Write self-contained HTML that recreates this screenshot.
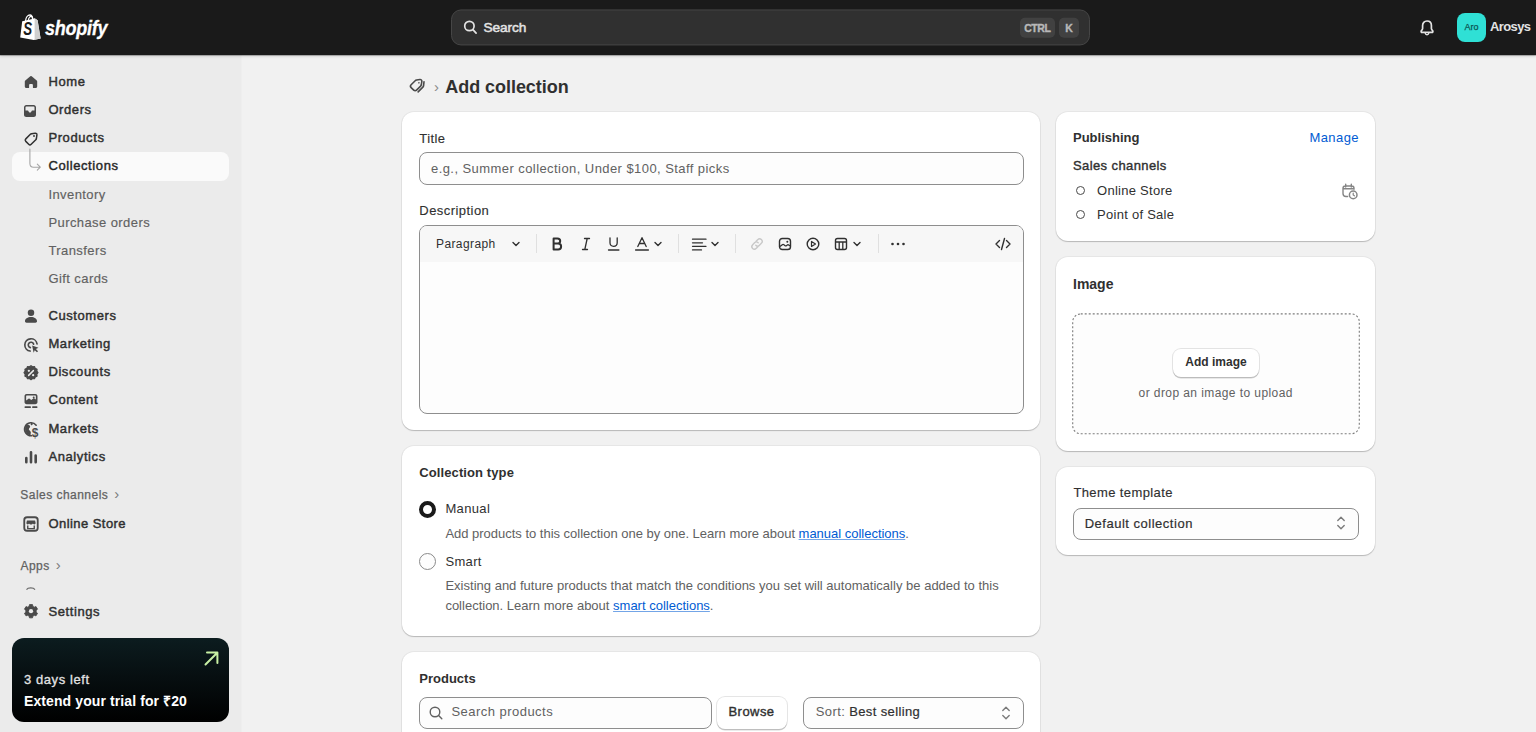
<!DOCTYPE html>
<html><head><meta charset="utf-8">
<style>
*{box-sizing:border-box;margin:0;padding:0}
html,body{width:1536px;height:732px;overflow:hidden;background:#f1f1f1;font-family:"Liberation Sans",sans-serif;font-size:13px;color:#303030}
.abs{position:absolute}
#top{position:absolute;left:0;top:0;width:1536px;height:55px;background:#1a1a1a;z-index:5;box-shadow:0 1px 0 rgba(0,0,0,.22),0 1px 3px rgba(0,0,0,.18)}
#side{position:absolute;left:0;top:56px;width:242px;height:676px;background:#ebebeb;border-right:1px solid #eeeeee}
.nav{position:absolute;left:48.4px;height:20px;line-height:20px;font-size:13px;font-weight:400;-webkit-text-stroke:.45px #303030;letter-spacing:.6px;color:#303030;white-space:nowrap}
.nav.sub{font-weight:400;color:#616161;letter-spacing:.42px;-webkit-text-stroke:.15px #616161}
.ico{position:absolute;left:20px;width:20px;height:20px}
.card{position:absolute;background:#fff;border-radius:12px;box-shadow:0 1px 0 0 rgba(0,0,0,.09),0 1px 1.5px 0 rgba(0,0,0,.12),0 0 0 1px rgba(0,0,0,.045)}
.lbl{position:absolute;font-size:13px;line-height:20px;color:#303030;white-space:nowrap}
.b{font-weight:700}
.inp{position:absolute;background:#fdfdfd;border:1px solid #8e8e8e;border-radius:8px}
.ph{position:absolute;color:#616161;font-size:13px;line-height:20px;white-space:nowrap}
.lnk{color:#005bd3;text-decoration:underline;text-decoration-color:rgba(0,91,211,.55)}

.kbd{top:18px;height:20px;line-height:20px;border-radius:5px;background:#414141;color:#b8b8b8;font-size:10.5px;font-weight:700;text-align:center;letter-spacing:-.45px;transform:translateY(-.3px);-webkit-text-stroke:.35px #b8b8b8}
.sec{font-size:12px;line-height:20px;color:#616161;letter-spacing:.47px;white-space:nowrap;-webkit-text-stroke:.25px #616161}
.chev{font-size:15px;margin-left:6px;letter-spacing:0;position:relative;top:0px;color:#7a7a7a;-webkit-text-stroke:0}

.btn{background:#fff;border-radius:8px;text-align:center;font-weight:700;color:#303030;box-shadow:0 0 0 1px rgba(0,0,0,.1),0 1.5px 0 0 rgba(0,0,0,.17)}

.m1{-webkit-text-stroke:.12px #303030}
.m2{font-weight:400;-webkit-text-stroke:.38px #303030}
</style></head><body>
<div id="top">
<svg class="abs" style="left:19px;top:13px" width="24" height="28" viewBox="0 0 24 28">
<path d="M3.2 8.2 L12.2 6.2 L15.6 5.2 L18.6 7.2 L21.6 25.4 L14.8 27 L1.2 24.6 Z" fill="#fff"/>
<path d="M15.6 5.2 L18.6 7.2 L21.6 25.4 L15.6 26.8 Z" fill="#cfcfcf"/>
<path d="M6.5 8 C6.8 4.5 8.8 2 11 2 C12.6 2 13.4 3.6 13.6 6.2" fill="none" stroke="#fff" stroke-width="1.3"/>
<path d="M9.2 7.5 C9.6 4.6 11 3.2 12.4 3.4 C13.4 3.6 13.8 5 13.6 6.4" fill="none" stroke="#fff" stroke-width="1.1"/>
<text transform="translate(4.2,22.2) scale(.74,1)" font-family="Liberation Sans" font-weight="700" font-style="italic" font-size="18" fill="#1a1a1a">S</text>
</svg>
<div class="abs" id="wm" style="left:44.5px;top:15.7px;font-size:21px;line-height:24px;font-weight:700;font-style:italic;color:#fff;letter-spacing:-.3px;transform:scaleX(.86);transform-origin:0 0;-webkit-text-stroke:.3px #fff">shopify</div>
<div class="abs" style="left:451px;top:10px;width:639px;height:36.4px;background:#303030;border:1px solid #464646;border-radius:10px;transform:translateY(-.55px)"></div>
<svg class="abs" style="left:462px;top:19px" width="18" height="18" viewBox="0 0 18 18"><circle cx="7.4" cy="7" r="4.7" fill="none" stroke="#e3e3e3" stroke-width="1.7"/><path d="M10.9 10.6 L14.1 14.1" stroke="#e3e3e3" stroke-width="1.7" stroke-linecap="round"/></svg>
<div class="abs" style="left:483.4px;top:18px;font-size:13.7px;line-height:20px;font-weight:400;-webkit-text-stroke:.5px #e3e3e3;letter-spacing:-.1px;color:#e3e3e3">Search</div>
<div class="abs kbd" style="left:1020.3px;width:34.6px;text-indent:-.5px">CTRL</div>
<div class="abs kbd" style="left:1059px;width:20px;text-indent:-.5px">K</div>
<svg class="abs" style="left:1417px;top:18px" width="20" height="20" viewBox="0 0 20 20"><path d="M10 3 C7.2 3 5.6 5.1 5.6 7.6 L5.6 10.4 C5.6 11.4 4.6 12.2 4.2 13 C3.9 13.7 4.3 14.4 5.1 14.4 L14.9 14.4 C15.7 14.4 16.1 13.7 15.8 13 C15.4 12.2 14.4 11.4 14.4 10.4 L14.4 7.6 C14.4 5.1 12.8 3 10 3 Z" fill="none" stroke="#e3e3e3" stroke-width="1.7" stroke-linejoin="round"/><path d="M8.2 15 C8.4 16.2 9.1 16.8 10 16.8 C10.9 16.8 11.6 16.2 11.8 15" fill="none" stroke="#e3e3e3" stroke-width="1.5"/></svg>
<div class="abs" style="left:1457px;top:13px;width:29px;height:29px;border-radius:8px;background:#2fe0d5;color:#0b5654;font-size:9px;line-height:29px;text-align:center;-webkit-text-stroke:.25px #0b5654">Aro</div>
<div class="abs" style="left:1490px;top:17px;font-size:13px;line-height:20px;font-weight:700;color:#e3e3e3;letter-spacing:-.62px">Arosys</div>
</div>
<div id="side" style="top:0;height:732px;z-index:0"></div>
<div id="sb">
<div class="abs" style="left:12px;top:152px;width:217px;height:29px;background:#fafafa;border-radius:8px"></div>
<svg class="abs" style="left:24px;top:146px" width="20" height="28" viewBox="0 0 20 28"><path d="M5.9 3v14.5c0 2.4 1.2 3.7 3.6 3.7h6.5M13.3 18.2l3 3-3 3" fill="none" stroke="#a6a6a6" stroke-width="1.1" stroke-linecap="round" stroke-linejoin="round"/></svg>
<svg class="ico" style="top:72px;left:20.6px" viewBox="0 0 20 20"><path d="M9.3 4.3a1.1 1.1 0 0 1 1.4 0l5 4.1c.3.3.5.6.5 1v5.1c0 .9-.7 1.5-1.5 1.5h-2.2a.6.6 0 0 1-.6-.6v-2.5c0-.5-.4-.9-.9-.9h-2c-.5 0-.9.4-.9.9v2.5a.6.6 0 0 1-.6.6h-2.2c-.8 0-1.5-.6-1.5-1.5v-5.1c0-.4.2-.7.5-1z" fill="#4a4a4a"/></svg><div class="nav " style="top:72px">Home</div>
<svg class="ico" style="top:100.6px;left:20.2px" viewBox="0 0 20 20"><path d="M6.3 4h7.4c1.3 0 2.3 1 2.3 2.3v7.4c0 1.3-1 2.3-2.3 2.3h-7.4c-1.3 0-2.3-1-2.3-2.3v-7.4c0-1.3 1-2.3 2.3-2.3zm-.8 5.5v-3.2c0-.4.4-.8.8-.8h7.4c.4 0 .8.4.8.8v3.2h-2.2c-.4 0-.7.3-.8.7-.2.8-.8 1.3-1.5 1.3s-1.3-.5-1.5-1.3c-.1-.4-.4-.7-.8-.7z" fill="#4a4a4a" fill-rule="evenodd"/></svg><div class="nav " style="top:100px">Orders</div>
<svg class="ico" style="top:129px;left:20.5px" viewBox="0 0 20 20"><path d="M10.6 4.7l3.6-.5c1-.1 1.8.7 1.7 1.7l-.5 3.6c-.1.5-.3.9-.6 1.2l-4.6 4.6c-.7.7-1.8.7-2.5 0l-2.9-2.9c-.7-.7-.7-1.8 0-2.5l4.6-4.6c.3-.3.7-.5 1.2-.6z" fill="none" stroke="#303030" stroke-width="1.5" stroke-linejoin="round"/><circle cx="13" cy="7" r=".9" fill="#303030"/></svg><div class="nav " style="top:128px">Products</div>
<svg class="ico" style="top:306px;left:20.9px;transform:scale(1.12);top:306.3px" viewBox="0 0 20 20"><circle cx="10" cy="7" r="2.9" fill="#4a4a4a"/><path d="M4.6 14.7c0-2.3 2.4-3.9 5.4-3.9s5.4 1.6 5.4 3.9c0 .8-.6 1.3-1.4 1.3h-8c-.8 0-1.4-.5-1.4-1.3z" fill="#4a4a4a"/></svg><div class="nav " style="top:306px">Customers</div>
<svg class="ico" style="top:334px;left:21px;transform:scale(1.1);top:334.8px" viewBox="0 0 20 20"><path d="M15.5 9a5.6 5.6 0 1 0-6.3 6.5" fill="none" stroke="#4a4a4a" stroke-width="1.5" stroke-linecap="round"/><path d="M12.4 9.2a2.5 2.5 0 1 0-3 3.2" fill="none" stroke="#4a4a4a" stroke-width="1.5" stroke-linecap="round"/><path d="M11 10.5l5.8 2-2.3 1.2 1.9 2-1 1-2-1.9-1 2.3z" fill="#4a4a4a"/></svg><div class="nav " style="top:334px">Marketing</div>
<svg class="ico" style="top:362px;left:20.9px;transform:scale(1.13);top:362.6px" viewBox="0 0 20 20"><path d="M10 3.5l1.4 1 1.7-.2.7 1.6 1.6.7-.2 1.7 1 1.4-1 1.4.2 1.7-1.6.7-.7 1.6-1.7-.2-1.4 1-1.4-1-1.7.2-.7-1.6-1.6-.7.2-1.7-1-1.4 1-1.4-.2-1.7 1.6-.7.7-1.6 1.7.2z" fill="#4a4a4a" stroke="#4a4a4a" stroke-width="1" stroke-linejoin="round"/><path d="M7.9 12.1l4.2-4.2" stroke="#ebebeb" stroke-width="1.3" stroke-linecap="round"/><circle cx="8.1" cy="8.1" r="1" fill="#ebebeb"/><circle cx="11.9" cy="11.9" r="1" fill="#ebebeb"/></svg><div class="nav " style="top:362px">Discounts</div>
<svg class="ico" style="top:390px;left:20.8px;transform:scale(1.08);top:390.6px" viewBox="0 0 20 20"><path d="M6 3.5h8c1.2 0 2 .8 2 2v5.5c0 1.2-.8 2-2 2h-8c-1.2 0-2-.8-2-2v-5.5c0-1.2.8-2 2-2zm-.5 2v4l2.2-1.6c.3-.2.7-.2 1 0l1.6 1.2 1.8-1.4c.3-.2.7-.2 1 0l1.4 1v-3.2c0-.3-.2-.5-.5-.5h-8c-.3 0-.5.2-.5.5z" fill="#4a4a4a" fill-rule="evenodd"/><circle cx="12.5" cy="6.7" r=".9" fill="#4a4a4a"/><path d="M4.7 15.7h4.6M11.7 15.7h3.6" stroke="#4a4a4a" stroke-width="1.5" stroke-linecap="round"/></svg><div class="nav " style="top:390px">Content</div>
<svg class="ico" style="top:419px;left:20.9px;transform:scale(1.08);top:419px" viewBox="0 0 20 20"><path d="M14.8 6.5a6 6 0 1 0-4.3 9.7" fill="none" stroke="#4a4a4a" stroke-width="1.5" stroke-linecap="round"/><path d="M6 5.5c1.5.2 3 .8 3.2 2 .2 1.3-1.2 1.7-1.2 2.8 0 1 1.5 1.3 1.8 2.5.2 1-.3 2.2-.3 3.2-2.5-.3-5-2.8-5-5.8 0-1.8.5-3.5 1.5-4.7z" fill="#4a4a4a"/><path d="M10 3.8c1 .2 1.8 1 1.5 2-.2.7-1 .8-1.8.5z" fill="#4a4a4a"/><text x="10.8" y="17" font-family="Liberation Sans" font-weight="700" font-size="11" fill="#4a4a4a">$</text></svg><div class="nav " style="top:419px">Markets</div>
<svg class="ico" style="top:447px;left:20.8px;transform:scale(1.04);top:447.2px" viewBox="0 0 20 20"><path d="M5.5 11v4M10 5.5v9.5M14.5 8.5v6.5" stroke="#4a4a4a" stroke-width="2.5" stroke-linecap="round"/></svg><div class="nav " style="top:447px">Analytics</div>
<svg class="ico" style="top:513.7px;left:20.5px;transform:scale(1.16)" viewBox="0 0 20 20"><rect x="4.2" y="4.2" width="11.6" height="11.6" rx="2.4" fill="none" stroke="#4a4a4a" stroke-width="1.6"/><path d="M6.5 7h7l.5 2.2c0 .7-.5 1.2-1.2 1.2s-1.1-.4-1.1-1c0 .6-.5 1-1.2 1h-1c-.7 0-1.2-.4-1.2-1 0 .6-.5 1-1.1 1s-1.2-.5-1.2-1.2z" fill="#4a4a4a"/><path d="M7.2 11.2v2.8h5.6v-2.8" fill="none" stroke="#4a4a4a" stroke-width="1.2"/></svg><div class="nav " style="top:514px;letter-spacing:.45px">Online Store</div>
<svg class="ico" style="top:601.3px;left:20.9px;transform:scale(1.07)" viewBox="0 0 20 20"><path d="M8.6 4h2.8l.4 1.7 1.2.7 1.7-.5 1.4 2.4-1.3 1.2v1.4l1.3 1.2-1.4 2.4-1.7-.5-1.2.7-.4 1.7h-2.8l-.4-1.7-1.2-.7-1.7.5-1.4-2.4 1.3-1.2v-1.4l-1.3-1.2 1.4-2.4 1.7.5 1.2-.7z" fill="#4a4a4a" stroke="#4a4a4a" stroke-width=".8" stroke-linejoin="round"/><circle cx="10" cy="10.2" r="2" fill="#ebebeb"/></svg><div class="nav " style="top:602px">Settings</div>
<div class="nav " style="top:156px;color:#1a1a1a">Collections</div>
<div class="nav sub" style="top:185px">Inventory</div>
<div class="nav sub" style="top:213px">Purchase orders</div>
<div class="nav sub" style="top:241px">Transfers</div>
<div class="nav sub" style="top:269px">Gift cards</div>
<div class="abs sec" style="left:20.3px;top:484px">Sales channels<span class="chev">&#8250;</span></div>
<div class="abs sec" style="left:20.5px;top:555px">Apps<span class="chev">&#8250;</span></div>
<svg class="abs" style="left:24px;top:586px" width="14" height="4" viewBox="0 0 14 4"><path d="M2.5 3.6c1.5-2.3 7-2.3 8.5 0" fill="none" stroke="#6a6a6a" stroke-width="1.1"/></svg>
<div class="abs" style="left:12px;top:638px;width:217px;height:84px;border-radius:12px;background:linear-gradient(180deg,#0c1c1f 0%,#070f11 45%,#000 100%)"></div>
<svg class="abs" style="left:203px;top:650px" width="17" height="17" viewBox="0 0 17 17"><path d="M4 2.6h10.4v10.4M14 3l-11.5 11.5" fill="none" stroke="#c8f0a4" stroke-width="2" stroke-linecap="round" stroke-linejoin="round"/></svg>
<div class="abs" style="left:24px;top:670px;font-size:13px;line-height:20px;color:#e3e3e3;letter-spacing:.58px;-webkit-text-stroke:.3px #e3e3e3">3 days left</div>
<div class="abs" style="left:24px;top:691px;font-size:14px;line-height:20px;color:#fff;font-weight:700;letter-spacing:.1px">Extend your trial for &#8377;20</div>
</div>
<div id="main">
<svg class="abs" style="left:406.5px;top:75.6px;transform:scale(1.13)" width="20" height="20" viewBox="0 0 20 20"><path d="M9.6 4.7l3-.5c1-.1 1.8.7 1.7 1.7l-.5 3c-.1.5-.3.9-.6 1.2l-3.6 3.6c-.7.7-1.8.7-2.5 0l-2.3-2.3c-.7-.7-.7-1.8 0-2.5l3.6-3.6c.3-.3.7-.5 1.2-.6z" fill="none" stroke="#4a4a4a" stroke-width="1.4" stroke-linejoin="round"/><path d="M16.2 6.2l-.4 3.6c-.1.5-.3.9-.6 1.2l-4.2 4.2" fill="none" stroke="#4a4a4a" stroke-width="1.4" stroke-linecap="round"/><circle cx="11.7" cy="7.2" r=".7" fill="#4a4a4a"/></svg>
<div class="abs" style="left:434px;top:76.5px;font-size:15px;line-height:20px;color:#8a8a8a">&#8250;</div>
<div class="abs b" style="left:445.3px;top:75px;font-size:18px;line-height:24px;color:#303030;letter-spacing:-.05px">Add collection</div>

<div class="card" style="left:402px;top:112px;width:638px;height:318px"></div>
<div class="lbl m1" style="left:419.3px;top:129px;letter-spacing:.4px">Title</div>
<div class="inp" style="left:418.5px;top:152px;width:605px;height:32.5px"></div>
<div class="ph" style="left:431px;top:159px;letter-spacing:.43px">e.g., Summer collection, Under $100, Staff picks</div>
<div class="lbl m1" style="left:419.3px;top:201px;letter-spacing:.45px">Description</div>
<div class="inp" style="left:418.5px;top:225px;width:605px;height:189px;overflow:hidden"><div style="height:36px;background:#f7f7f7"></div></div>
<div id="tb">
<div class="abs" style="left:436px;top:234px;font-size:12px;line-height:20px;color:#303030;letter-spacing:.4px">Paragraph</div>
<svg class="abs" style="left:510px;top:238px" width="12" height="12" viewBox="0 0 12 12"><path d="M3 4.6l3 3 3-3" fill="none" stroke="#303030" stroke-width="1.4" stroke-linecap="round" stroke-linejoin="round"/></svg><div class="abs" style="left:536px;top:234px;width:1px;height:19px;background:#e0e0e0"></div><svg class="abs" style="left:548px;top:234px" width="20" height="20" viewBox="0 0 20 20"><path d="M5.6 4.4h3.8c1.7 0 2.8 1.1 2.8 2.6s-1.1 2.6-2.8 2.6h-3.8zM5.6 9.6h4.5c1.8 0 3 1.2 3 2.9s-1.2 2.9-3 2.9h-4.5z" fill="none" stroke="#303030" stroke-width="2" stroke-linejoin="round"/></svg>
<svg class="abs" style="left:576px;top:234px" width="20" height="20" viewBox="0 0 20 20"><path d="M8.5 4.5h5M6.5 15.5h5M11.2 4.5l-2.4 11" fill="none" stroke="#303030" stroke-width="1.3" stroke-linecap="round"/></svg>
<svg class="abs" style="left:603px;top:234px" width="20" height="20" viewBox="0 0 20 20"><path d="M7 3.8v5c0 2.2 1.4 3.5 3.6 3.5s3.6-1.3 3.6-3.5v-5M5.5 16h10.4" fill="none" stroke="#303030" stroke-width="1.3" stroke-linecap="round"/></svg>
<svg class="abs" style="left:631px;top:234px" width="20" height="20" viewBox="0 0 20 20"><path d="M6.8 12.5l4.2-8.8 4.2 8.8M8.2 9.5h5.6M4.6 16h12.8" fill="none" stroke="#303030" stroke-width="1.3" stroke-linecap="round" stroke-linejoin="round"/></svg>
<svg class="abs" style="left:652px;top:238px" width="12" height="12" viewBox="0 0 12 12"><path d="M3 4.6l3 3 3-3" fill="none" stroke="#303030" stroke-width="1.4" stroke-linecap="round" stroke-linejoin="round"/></svg><div class="abs" style="left:678px;top:234px;width:1px;height:19px;background:#e0e0e0"></div><svg class="abs" style="left:689px;top:234px" width="20" height="20" viewBox="0 0 20 20"><path d="M3.5 5.2h13.5M3.5 8.8h10M3.5 12.3h13.5M3.5 15.9h9" fill="none" stroke="#303030" stroke-width="1.3" stroke-linecap="round"/></svg>
<svg class="abs" style="left:709px;top:238px" width="12" height="12" viewBox="0 0 12 12"><path d="M3 4.6l3 3 3-3" fill="none" stroke="#303030" stroke-width="1.4" stroke-linecap="round" stroke-linejoin="round"/></svg><div class="abs" style="left:735px;top:234px;width:1px;height:19px;background:#e0e0e0"></div><svg class="abs" style="left:746.5px;top:234px" width="20" height="20" viewBox="0 0 20 20"><g transform="rotate(-45 10 10)" fill="none" stroke="#c8c8c8" stroke-width="1.4" stroke-linecap="round"><path d="M8.6 12.6h-2.1c-1.5 0-2.7-1.1-2.7-2.6s1.2-2.6 2.7-2.6h2.6c1.5 0 2.6 1.1 2.6 2.6"/><path d="M11.4 7.4h2.1c1.5 0 2.7 1.1 2.7 2.6s-1.2 2.6-2.7 2.6h-2.6c-1.5 0-2.6-1.1-2.6-2.6"/></g></svg>
<svg class="abs" style="left:774.5px;top:234px" width="20" height="20" viewBox="0 0 20 20"><rect x="4.5" y="4.5" width="11" height="11" rx="2.8" fill="none" stroke="#303030" stroke-width="1.4"/><path d="M5 12.5l2.3-1.8c.5-.4 1.1-.4 1.6 0l1.2 1c.4.3.9.3 1.3 0l.8-.6c.5-.4 1.1-.4 1.6 0l1.2 1" fill="none" stroke="#303030" stroke-width="1.3"/><circle cx="12.3" cy="7.8" r="1" fill="#303030"/></svg>
<svg class="abs" style="left:802.5px;top:234px" width="20" height="20" viewBox="0 0 20 20"><circle cx="10" cy="10" r="5.8" fill="none" stroke="#303030" stroke-width="1.4"/><path d="M8.5 7.5v5l4-2.5z" fill="none" stroke="#303030" stroke-width="1.2" stroke-linejoin="round"/></svg>
<svg class="abs" style="left:830.5px;top:234px" width="20" height="20" viewBox="0 0 20 20"><rect x="4.5" y="4.5" width="11" height="11" rx="2" fill="none" stroke="#303030" stroke-width="1.4"/><path d="M4.5 8h11M8.2 8v7.5M11.8 8v7.5" fill="none" stroke="#303030" stroke-width="1.3"/></svg>
<svg class="abs" style="left:851px;top:238px" width="12" height="12" viewBox="0 0 12 12"><path d="M3 4.6l3 3 3-3" fill="none" stroke="#303030" stroke-width="1.4" stroke-linecap="round" stroke-linejoin="round"/></svg><div class="abs" style="left:878px;top:234px;width:1px;height:19px;background:#e0e0e0"></div><svg class="abs" style="left:887.5px;top:234px" width="20" height="20" viewBox="0 0 20 20"><circle cx="4.5" cy="10" r="1.3" fill="#303030"/><circle cx="10" cy="10" r="1.3" fill="#303030"/><circle cx="15.5" cy="10" r="1.3" fill="#303030"/></svg>
<svg class="abs" style="left:993px;top:234px" width="20" height="20" viewBox="0 0 20 20"><path d="M6.5 6.5l-3.5 3.5 3.5 3.5M13.5 6.5l3.5 3.5-3.5 3.5M11.5 4.5l-3 11" fill="none" stroke="#303030" stroke-width="1.4" stroke-linecap="round" stroke-linejoin="round"/></svg>
</div>

<div class="card" style="left:402px;top:446px;width:638px;height:190px"></div>
<div class="lbl b" style="left:419.3px;top:463px;letter-spacing:.1px">Collection type</div>
<div class="abs" style="left:419px;top:501px;width:17px;height:17px;border-radius:50%;border:4.5px solid #1a1a1a;background:#fff"></div>
<div class="lbl" style="left:445.4px;top:499px;letter-spacing:.35px">Manual</div>
<div class="ph" id="h1" style="left:445.4px;top:524px;letter-spacing:-.015px">Add products to this collection one by one. Learn more about <span class="lnk">manual collections</span>.</div>
<div class="abs" style="left:419px;top:553px;width:17px;height:17px;border-radius:50%;border:1px solid #8a8a8a;background:#fdfdfd"></div>
<div class="lbl" style="left:445.4px;top:552px;letter-spacing:.35px">Smart</div>
<div class="ph" id="h2" style="left:445.4px;top:576px;letter-spacing:.013px">Existing and future products that match the conditions you set will automatically be added to this</div>
<div class="ph" id="h3" style="left:445.4px;top:596px;letter-spacing:0">collection. Learn more about <span class="lnk">smart collections</span>.</div>

<div class="card" style="left:402px;top:652px;width:638px;height:120px"></div>
<div class="lbl b" style="left:419.3px;top:669px">Products</div>
<div class="inp" style="left:418.5px;top:696.5px;width:293.5px;height:32px"></div>
<svg class="abs" style="left:426px;top:703px" width="20" height="20" viewBox="0 0 20 20"><circle cx="9" cy="9" r="4.8" fill="none" stroke="#616161" stroke-width="1.4"/><path d="M12.6 12.6l3.2 3.2" stroke="#616161" stroke-width="1.4" stroke-linecap="round"/></svg>
<div class="ph" style="left:451.4px;top:702px;letter-spacing:.47px">Search products</div>
<div class="abs btn m2" style="left:716.5px;top:697px;width:70px;height:31.5px;line-height:30px;font-size:13px;letter-spacing:.44px">Browse</div>
<div class="inp" style="left:803px;top:696.5px;width:221px;height:32px"></div>
<div class="ph" style="left:815.8px;top:702px;letter-spacing:.38px">Sort: <span style="color:#303030;-webkit-text-stroke:.2px #303030">Best selling</span></div>
<svg class="abs ud" style="left:995.7px;top:702.8px" width="20" height="20" viewBox="0 0 20 20"><path d="M6.8 7.4l3.2-3.1 3.2 3.1M6.8 12.6l3.2 3.1 3.2-3.1" fill="none" stroke="#7a7a7a" stroke-width="1.4" stroke-linecap="round" stroke-linejoin="round"/></svg>

<div class="card" style="left:1056px;top:112px;width:319px;height:129px"></div>
<div class="lbl b" style="left:1073px;top:128px">Publishing</div>
<div class="lbl" style="left:1309.4px;top:128px;color:#005bd3;letter-spacing:.43px">Manage</div>
<div class="lbl m2" style="left:1073px;top:156px;letter-spacing:.4px">Sales channels</div>
<div class="abs" style="left:1076px;top:186px;width:9px;height:9px;border-radius:50%;border:1.8px solid #4a4a4a"></div>
<div class="lbl" style="left:1097.1px;top:181px;letter-spacing:.26px">Online Store</div>
<div class="abs" style="left:1076px;top:210px;width:9px;height:9px;border-radius:50%;border:1.8px solid #4a4a4a"></div>
<div class="lbl" style="left:1097.1px;top:205px;letter-spacing:.26px">Point of Sale</div>
<svg class="abs" style="left:1339px;top:181px" width="20" height="20" viewBox="0 0 20 20"><path d="M8.6 15.5h-1.6c-1.9 0-3-1.1-3-3v-5.3c0-1.3.9-2.2 2.2-2.2h6.6c1.3 0 2.2.9 2.2 2.2v1.1M6.7 3.2v2.8M12.3 3.2v2.8M4.5 7.8h10" fill="none" stroke="#858585" stroke-width="1.4" stroke-linecap="round"/><circle cx="14.2" cy="13.9" r="3.8" fill="#fff" stroke="#858585" stroke-width="1.5"/><path d="M14.2 12.1v1.9l1.2.8" fill="none" stroke="#858585" stroke-width="1.2" stroke-linecap="round"/></svg>

<div class="card" style="left:1056px;top:257px;width:319px;height:193.5px"></div>
<div class="lbl b" style="left:1073px;top:274px;font-size:14px">Image</div>
<svg class="abs" style="left:1072px;top:313px" width="288" height="122" viewBox="0 0 288 122"><rect x="0.7" y="0.9" width="286.6" height="119.8" rx="8" fill="#fdfdfd" stroke="#7c7c7c" stroke-width="1.1" stroke-dasharray="2 2"/></svg>
<div class="abs btn" style="left:1173px;top:348.5px;width:86px;height:28px;line-height:27px;font-size:12px">Add image</div>
<div class="ph" style="left:1138.6px;top:383px;font-size:12px;letter-spacing:.415px">or drop an image to upload</div>

<div class="card" style="left:1056px;top:467px;width:319px;height:88px"></div>
<div class="lbl" style="left:1073.4px;top:483px;letter-spacing:.39px;-webkit-text-stroke:.15px #303030">Theme template</div>
<div class="inp" style="left:1072.5px;top:507.5px;width:286.5px;height:32px"></div>
<div class="lbl" style="left:1084.7px;top:514px;letter-spacing:.51px;-webkit-text-stroke:.2px #303030">Default collection</div>
<svg class="abs ud" style="left:1331.2px;top:513.4px" width="20" height="20" viewBox="0 0 20 20"><path d="M6.8 7.4l3.2-3.1 3.2 3.1M6.8 12.6l3.2 3.1 3.2-3.1" fill="none" stroke="#7a7a7a" stroke-width="1.4" stroke-linecap="round" stroke-linejoin="round"/></svg>
</div>
</body></html>
